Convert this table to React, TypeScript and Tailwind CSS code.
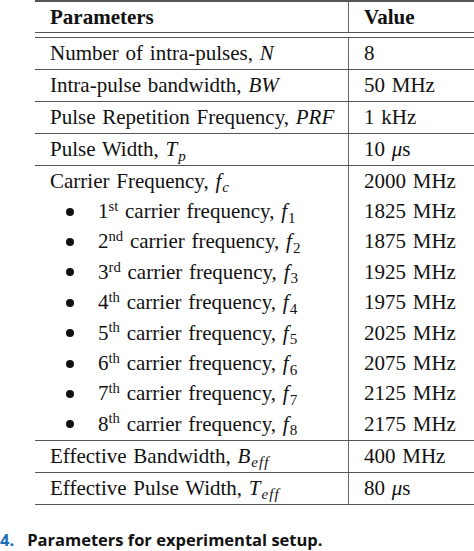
import React from 'react';

const serif = { fontFamily: '"Liberation Serif", "Times New Roman", serif' };

const ord = (n: number) => (n === 1 ? 'st' : n === 2 ? 'nd' : n === 3 ? 'rd' : 'th');

const carriers = [1825, 1875, 1925, 1975, 2025, 2075, 2125, 2175];

const Row = ({ left, right, className = '' }: { left: React.ReactNode; right: React.ReactNode; className?: string }) => (
    <div className={`flex h-[32px] border-b border-[#555] ${className}`}>
        <div className="w-[314px] shrink-0 flex items-center pl-[15px] border-r-[1.5px] border-[#666]">{left}</div>
        <div className="flex-1 flex items-center pl-[15px]">{right}</div>
    </div>
);

// math-style symbol with subscript
const Sub = ({ base, sub }: { base: string; sub: string }) => (
    <span className="italic">
        {base}
        <sub className={`text-[0.72em] ml-[1px] top-[0.3em] tracking-[1px] ${/[a-z]/.test(sub) ? 'italic' : 'not-italic'}`}>{sub}</sub>
    </span>
);

export default function App() {
    return (
        <div className="w-[474px] h-[551px] overflow-hidden bg-white text-[#111]">
            <div className="ml-[35px] w-[520px] text-[21px] leading-none [word-spacing:1.5px]" style={serif}>
                <div className="border-t-2 border-[#555]" />
                <div className="flex h-[31px] border-b border-[#555]">
                    <div className="w-[314px] shrink-0 flex items-center pl-[15px] border-r-[1.5px] border-[#666] font-bold">Parameters</div>
                    <div className="flex-1 flex items-center pl-[15px] font-bold">Value</div>
                </div>
                <div className="h-[4px]" />
                <div className="border-t border-[#555]" />
                <Row left={<span>Number of intra-pulses, <i>N</i></span>} right="8" className="h-[32px]" />
                <Row left={<span>Intra-pulse bandwidth, <i>BW</i></span>} right="50 MHz" className="h-[31px]" />
                <Row left={<span>Pulse Repetition Frequency, <i>PRF</i></span>} right="1 kHz" />
                <Row left={<span>Pulse Width, <Sub base="T" sub="p" /></span>} right={<span>10 <i>μ</i>s</span>} />
                <div className="flex border-b border-[#555]">
                    <div className="w-[314px] shrink-0 border-r-[1.5px] border-[#666]">
                        <div className="h-[30.4px] flex items-center pl-[15px]">
                            <span>Carrier Frequency, <Sub base="f" sub="c" /></span>
                        </div>
                        {carriers.map((_, i) => (
                            <div key={i} className="h-[30.4px] flex items-center">
                                <span className="w-[63px] pl-[31px] flex">
                                    <span className="w-[8px] h-[8px] rounded-full bg-[#111]" />
                                </span>
                                <span>
                                    {i + 1}
                                    <sup className="text-[0.7em] -top-[0.5em]">{ord(i + 1)}</sup> carrier frequency, <Sub base="f" sub={String(i + 1)} />
                                </span>
                            </div>
                        ))}
                    </div>
                    <div className="flex-1 pl-[15px]">
                        <div className="h-[30.4px] flex items-center">2000 MHz</div>
                        {carriers.map((c) => (
                            <div key={c} className="h-[30.4px] flex items-center">{c} MHz</div>
                        ))}
                    </div>
                </div>
                <Row left={<span>Effective Bandwidth, <Sub base="B" sub="eff" /></span>} right="400 MHz" />
                <Row left={<span>Effective Pulse Width, <Sub base="T" sub="eff" /></span>} right={<span>80 <i>μ</i>s</span>} className="border-b-[1.5px]" />
            </div>
            <div className="mt-[27px] text-[16.5px] font-bold text-[#111] leading-none" style={{ fontFamily: '"Open Sans", "Noto Sans", sans-serif' }}>
                <span className="text-[#1c6fb8]">4.</span>
                <span className="ml-[13px]">Parameters for experimental setup.</span>
            </div>
        </div>
    );
}
